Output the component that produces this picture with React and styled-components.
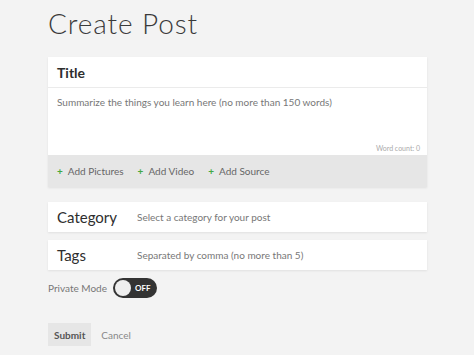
import React from "react";
import styled, { createGlobalStyle } from "styled-components";

const GlobalStyle = createGlobalStyle`
  body {
    margin: 0;
    background: #f3f3f3;
    font-family: "Lato", "Open Sans", sans-serif;
    color: #333;
  }
`;

const Page = styled.div`
  width: 474px;
  height: 355px;
  overflow: hidden;
  padding: 0 47px 0 48px;
  box-sizing: border-box;
`;

const Heading = styled.h1`
  margin: 0;
  padding-top: 6px;
  height: 57px;
  box-sizing: border-box;
  font-size: 28px;
  font-weight: 300;
  color: #3a3a3a;
  letter-spacing: 0.9px;
`;

const Card = styled.div`
  background: #fff;
  box-shadow: 0 1px 2px rgba(0, 0, 0, 0.08);
  margin-bottom: ${(p) => p.$gap || 8}px;
`;

const CardHeader = styled.div`
  height: 30px;
  display: flex;
  align-items: center;
  padding: 0 9px;
  border-bottom: 1px solid #ebebeb;
  font-size: 14px;
  font-weight: 700;
  color: #2e2e2e;
`;

const TextArea = styled.div`
  height: 67px;
  position: relative;
  padding: 8px 9px;
  box-sizing: border-box;
  font-size: 10px;
  color: #777;
`;

const WordCount = styled.span`
  position: absolute;
  right: 7px;
  bottom: 3px;
  font-size: 7px;
  color: #aaa;
`;

const Toolbar = styled.div`
  height: 32px;
  background: #e6e6e6;
  display: flex;
  align-items: center;
  gap: 14px;
  padding: 0 9px;
`;

const ToolButton = styled.span`
  font-size: 10px;
  color: #666;
  &::before {
    content: "+";
    color: #43a843;
    font-weight: 700;
    margin-right: 5px;
  }
`;

const Row = styled(Card)`
  height: 30px;
  display: flex;
  align-items: center;
  padding: 0 9px;
`;

const RowLabel = styled.span`
  width: 80px;
  font-size: 15px;
  color: #2e2e2e;
`;

const RowHint = styled.span`
  font-size: 10px;
  color: #777;
`;

const ModeLine = styled.div`
  display: flex;
  align-items: center;
  gap: 6px;
  margin-top: 8px;
  font-size: 10px;
  color: #777;
`;

const Switch = styled.div`
  width: 44px;
  height: 20px;
  border-radius: 10px;
  background: #333;
  display: flex;
  align-items: center;
  gap: 4px;
  padding: 0 2px;
  box-sizing: border-box;
  &::before {
    content: "";
    width: 16px;
    height: 16px;
    border-radius: 50%;
    background: #eee;
  }
`;

const SwitchText = styled.span`
  font-size: 8px;
  font-weight: 700;
  color: #fff;
`;

const Actions = styled.div`
  display: flex;
  align-items: center;
  gap: 4px;
  margin-top: 25px;
`;

const Button = styled.button`
  border: none;
  font-family: inherit;
  font-size: 10px;
  height: 23px;
  padding: 0 6px;
  background: ${(p) => (p.$primary ? "#e6e6e6" : "transparent")};
  color: ${(p) => (p.$primary ? "#555" : "#888")};
  font-weight: ${(p) => (p.$primary ? 700 : 400)};
`;

export default function App() {
  return (
    <>
      <GlobalStyle />
      <Page>
        <Heading>Create Post</Heading>
        <Card $gap={15}>
          <CardHeader>Title</CardHeader>
          <TextArea>
            Summarize the things you learn here (no more than 150 words)
            <WordCount>Word count: 0</WordCount>
          </TextArea>
          <Toolbar>
            <ToolButton>Add Pictures</ToolButton>
            <ToolButton>Add Video</ToolButton>
            <ToolButton>Add Source</ToolButton>
          </Toolbar>
        </Card>
        <Row>
          <RowLabel>Category</RowLabel>
          <RowHint>Select a category for your post</RowHint>
        </Row>
        <Row>
          <RowLabel>Tags</RowLabel>
          <RowHint>Separated by comma (no more than 5)</RowHint>
        </Row>
        <ModeLine>
          Private Mode
          <Switch>
            <SwitchText>OFF</SwitchText>
          </Switch>
        </ModeLine>
        <Actions>
          <Button $primary>Submit</Button>
          <Button>Cancel</Button>
        </Actions>
      </Page>
    </>
  );
}
